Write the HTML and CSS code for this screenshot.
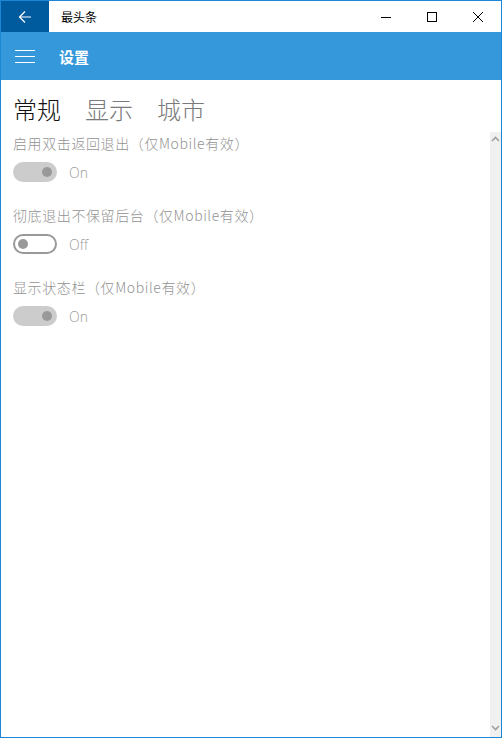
FILE: index.html
```html
<!DOCTYPE html>
<html lang="zh">
<head>
<meta charset="utf-8">
<title>最头条</title>
<link rel="stylesheet" href="styles.css">
</head>
<body>
<div class="window">
  <header class="titlebar">
    <div class="back">
      <svg width="14" height="14" viewBox="0 0 14 14"><path d="M13 7H1.5M7 1.5L1.5 7L7 12.5" fill="none" stroke="#fff" stroke-width="1.2"/></svg>
    </div>
    <div class="title">最头条</div>
    <div class="controls">
      <span class="ctl"><svg width="10" height="10" viewBox="0 0 10 10"><path d="M0 5.5H10" stroke="#000" stroke-width="1"/></svg></span>
      <span class="ctl"><svg width="10" height="10" viewBox="0 0 10 10"><rect x="0.5" y="0.5" width="9" height="9" fill="none" stroke="#000" stroke-width="1"/></svg></span>
      <span class="ctl"><svg width="10" height="10" viewBox="0 0 10 10"><path d="M0 0L10 10M10 0L0 10" stroke="#000" stroke-width="1"/></svg></span>
    </div>
  </header>
  <nav class="appbar">
    <span class="hamburger"><i></i><i></i><i></i></span>
    <span class="apptitle">设置</span>
  </nav>
  <main class="content">
    <div class="pivot">
      <span class="tab active">常规</span>
      <span class="tab">显示</span>
      <span class="tab">城市</span>
    </div>
    <div class="scroller">
      <div class="list">
        <div class="setting">
          <div class="label">启用双击返回退出（仅Mobile有效）</div>
          <div class="toggle-row"><span class="toggle on"><b></b></span><span class="state">On</span></div>
        </div>
        <div class="setting">
          <div class="label">彻底退出不保留后台（仅Mobile有效）</div>
          <div class="toggle-row"><span class="toggle off"><b></b></span><span class="state">Off</span></div>
        </div>
        <div class="setting">
          <div class="label">显示状态栏（仅Mobile有效）</div>
          <div class="toggle-row"><span class="toggle on"><b></b></span><span class="state">On</span></div>
        </div>
      </div>
      <div class="scrollbar">
        <svg width="9" height="6" viewBox="0 0 9 6"><path d="M1 5L4.5 1.5L8 5" fill="none" stroke="#a0a0a0" stroke-width="1.6"/></svg>
        <svg width="9" height="6" viewBox="0 0 9 6"><path d="M1 1L4.5 4.5L8 1" fill="none" stroke="#a0a0a0" stroke-width="1.6"/></svg>
      </div>
    </div>
  </main>
</div>
</body>
</html>
```
FILE: styles.css
```css
html, body {
  margin: 0;
  padding: 0;
  background: #fff;
}

body {
  font-family: "Noto Sans CJK SC", "Liberation Sans", sans-serif;
}

.window {
  box-sizing: border-box;
  width: 502px;
  height: 738px;
  border: 1px solid #1b86d6;
  display: flex;
  flex-direction: column;
  overflow: hidden;
}

.titlebar {
  height: 31px;
  display: flex;
  align-items: center;
  background: #fff;
  flex: none;
}

.back {
  width: 48px;
  height: 31px;
  background: #005a9e;
  display: flex;
  align-items: center;
  justify-content: center;
}

.title {
  margin-left: 12px;
  font-size: 12px;
  color: #000;
  flex: 1;
  line-height: 31px;
}

.controls {
  display: flex;
  height: 31px;
}

.ctl {
  width: 46px;
  height: 31px;
  display: flex;
  align-items: center;
  justify-content: center;
}

.appbar {
  height: 48px;
  background: #3498db;
  display: flex;
  align-items: center;
  flex: none;
}

.hamburger {
  width: 20px;
  margin-left: 14px;
  display: flex;
  flex-direction: column;
  gap: 5px;
}

.hamburger i {
  display: block;
  height: 1px;
  background: #fff;
}

.apptitle {
  margin-left: 24px;
  color: #fff;
  font-size: 15px;
  font-weight: bold;
}

.content {
  flex: 1;
  display: flex;
  flex-direction: column;
  min-height: 0;
}

.pivot {
  display: flex;
  gap: 24px;
  padding: 12px 0 0 12px;
  height: 40px;
  flex: none;
}

.tab {
  font-size: 24px;
  line-height: 34px;
  color: #7a7a7a;
  font-weight: 300;
}

.tab.active {
  color: #111;
}

.scroller {
  flex: 1;
  display: flex;
  min-height: 0;
}

.list {
  flex: 1;
  padding-left: 12px;
  display: flex;
  flex-direction: column;
}

.setting {
  height: 72px;
  flex: none;
}

.label {
  font-size: 14px;
  line-height: 22px;
  color: #939393;
  font-weight: 300;
  text-spacing-trim: space-all;
  letter-spacing: 0.6px;
}

.toggle-row {
  display: flex;
  align-items: center;
  gap: 12px;
  margin-top: 8px;
}

.toggle {
  box-sizing: border-box;
  width: 44px;
  height: 20px;
  border-radius: 10px;
  display: flex;
  align-items: center;
  padding: 0 5px;
}

.toggle b {
  width: 10px;
  height: 10px;
  border-radius: 50%;
  background: #999;
}

.toggle.on {
  background: #cccccc;
  justify-content: flex-end;
}

.toggle.off {
  border: 2px solid #999;
  padding: 0 3px;
}

.state {
  font-family: "Open Sans", "Liberation Sans", sans-serif;
  font-size: 14px;
  color: #9a9a9a;
  font-weight: 300;
}

.scrollbar {
  width: 11px;
  background: #f0f0f0;
  display: flex;
  flex-direction: column;
  justify-content: space-between;
  align-items: center;
  padding: 4px 0 6px;
  box-sizing: border-box;
}
```
